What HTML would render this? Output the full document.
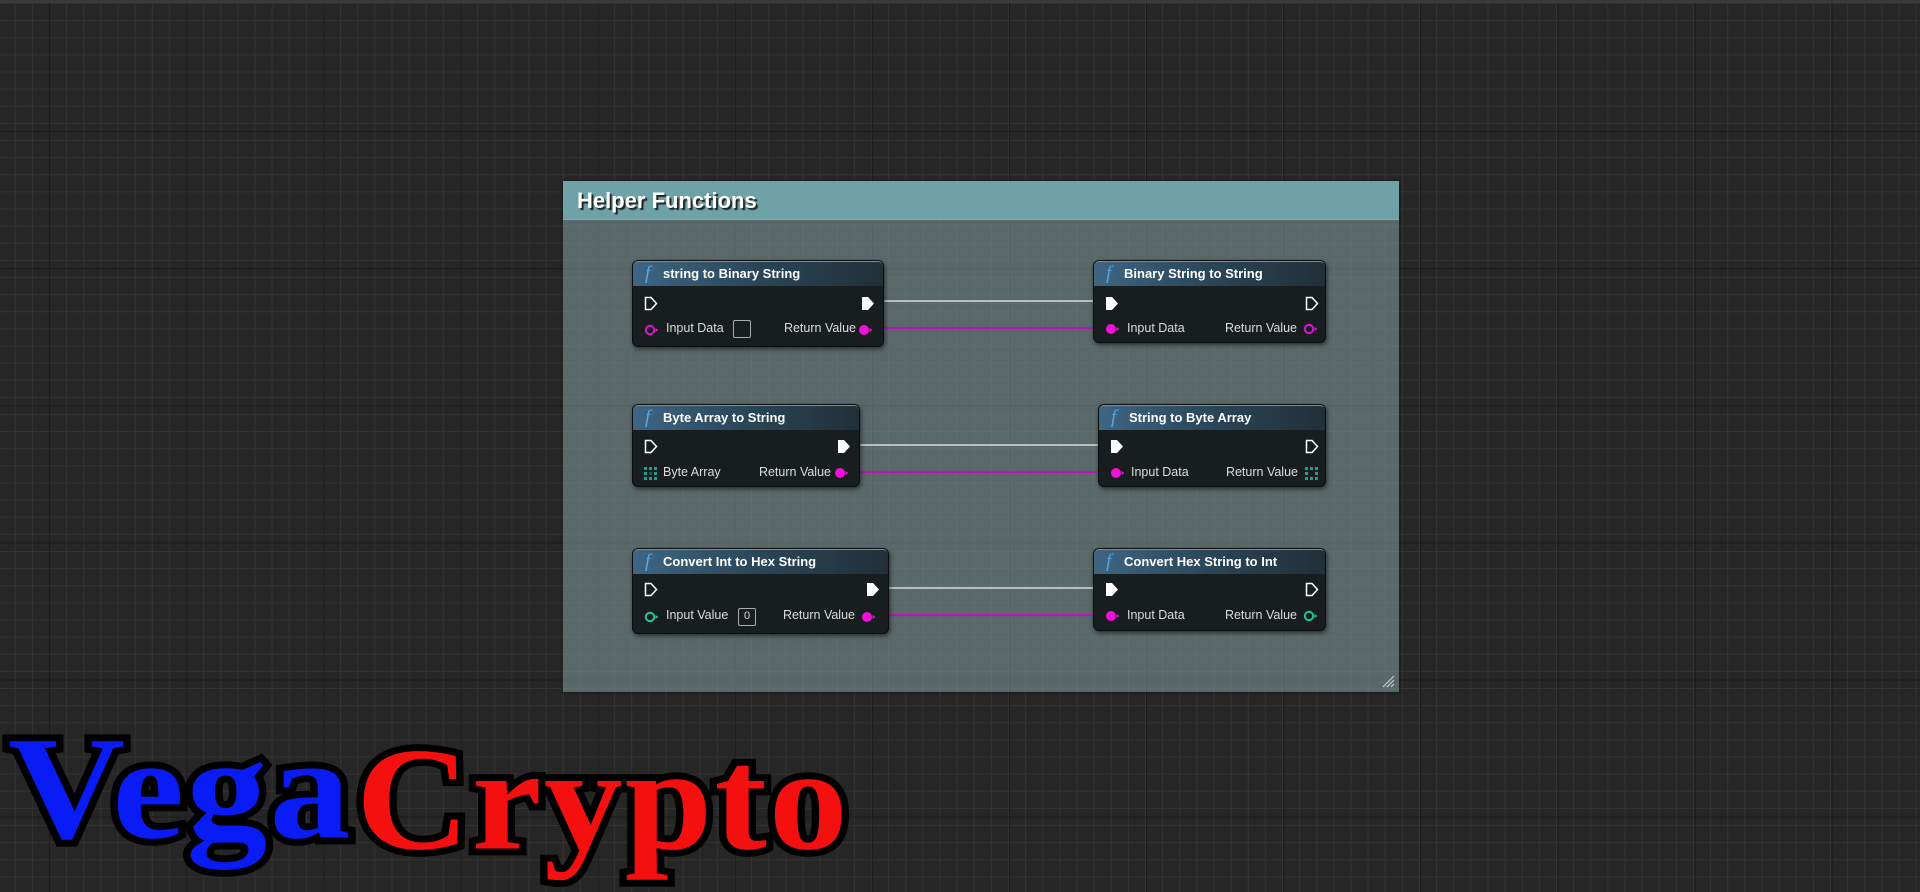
<!DOCTYPE html>
<html><head><meta charset="utf-8"><style>
*{margin:0;padding:0;box-sizing:border-box}
body{width:1920px;height:892px;overflow:hidden;position:relative;background:#262626;font-family:"Liberation Sans",sans-serif}
.grid{position:absolute;left:0;top:0;width:1920px;height:892px;
background-image:
linear-gradient(to right,#1b1b1b 1px,transparent 1px),
linear-gradient(to bottom,#1b1b1b 1px,transparent 1px),
linear-gradient(to right,#333 1px,transparent 1px),
linear-gradient(to bottom,#333 1px,transparent 1px);
background-size:137.14px 137.14px,137.14px 137.14px,17.14px 17.14px,17.14px 17.14px;
background-position:49px 0,0 131px,49px 0,0 3px;}
.topline{position:absolute;left:0;top:0;width:1920px;height:3px;background:#3a3a3a}
.comment{position:absolute;left:563px;top:181px;width:836px;height:511px;background:rgba(140,170,170,0.5);box-shadow:0 0 3px rgba(0,0,0,.6)}
.chead{position:absolute;left:0;top:0;width:100%;height:39px;background:#6ea2a6;border-bottom:1px solid #7fb2b6}
.chead span{position:absolute;left:14px;top:7px;font-size:22px;font-weight:bold;color:#fff;text-shadow:2px 2px 1px #222}
.node{position:absolute;background:#181e20;border:1px solid #0a0c0d;border-radius:6px;box-shadow:1px 2px 5px rgba(0,0,0,.55);color:#ddd;font-size:12.5px}
.nh{position:absolute;left:0;top:0;right:0;height:25px;border-radius:5px 5px 0 0;background:linear-gradient(to right,#3f6683,#2a4558 50%,#213038);border-top:1px solid #6e93ad}
.nh i{position:absolute;left:12px;top:1px;font-family:"Liberation Serif",serif;font-size:19px;color:#52a8e8}
.nh b{position:absolute;left:30px;top:4px;font-size:13px;color:#fff}
.p{position:absolute}
.lbl{position:absolute;white-space:nowrap}
.box{position:absolute;width:18px;height:18px;border:1.5px solid #aaa;border-radius:2px;font-size:11px;text-align:center;line-height:15px;color:#ddd}
.w{position:absolute}
.logo{position:absolute;font-family:"Liberation Serif",serif;font-weight:bold;font-size:150px;-webkit-text-stroke:14px #000;paint-order:stroke fill;transform-origin:0 0;letter-spacing:2px;white-space:nowrap;line-height:1}
</style></head><body>
<div class="grid"></div>
<div class="topline"></div>

<div class="comment">
 <div class="chead"><span>Helper Functions</span></div>
 <svg style="position:absolute;right:4px;bottom:4px" width="14" height="14"><path d="M2 13 L13 2 M6 13 L13 6 M10 13 L13 10" stroke="#ccc" stroke-width="1.2"/></svg>
</div>

<div class="w" style="left:872px;top:300px;width:224px;height:2px;background:#bdbdbd"></div>
<div class="w" style="left:871px;top:327px;width:225px;height:2px;background:#c010c0"></div>
<div class="w" style="left:846px;top:444px;width:255px;height:2px;background:#bdbdbd"></div>
<div class="w" style="left:846px;top:471px;width:255px;height:2px;background:#c010c0"></div>
<div class="w" style="left:876px;top:587px;width:220px;height:2px;background:#bdbdbd"></div>
<div class="w" style="left:876px;top:614px;width:220px;height:2px;background:#c010c0"></div>

<div class="node" style="left:632px;top:260px;width:252px;height:87px">
 <div class="nh"><i>f</i><b>string to Binary String</b></div>
 <svg class="p" style="left:11px;top:35px" width="14" height="15"><path d="M1.5 1.5H7L12.5 7.5L7 13.5H1.5Z" fill="none" stroke="#fff" stroke-width="1.5"/></svg>
 <svg class="p" style="left:228px;top:35px" width="14" height="15"><path d="M1 1H7L13 7.5L7 14H1Z" fill="#fff"/></svg>
 <svg class="p" style="left:11px;top:62px" width="16" height="14"><circle cx="6" cy="7" r="4.2" fill="none" stroke="#e010d0" stroke-width="2"/><path d="M11.5 5L14.5 7L11.5 9Z" fill="#e010d0"/></svg>
 <span class="lbl" style="left:33px;top:60px">Input Data</span>
 <div class="box" style="left:100px;top:59px"></div>
 <span class="lbl" style="right:27px;top:60px">Return Value</span>
 <svg class="p" style="left:225px;top:62px" width="16" height="14"><circle cx="6" cy="7" r="5" fill="#f010d8"/><path d="M11.5 5L14.5 7L11.5 9Z" fill="#f010d8"/></svg>
</div>

<div class="node" style="left:1093px;top:260px;width:233px;height:83px">
 <div class="nh"><i>f</i><b>Binary String to String</b></div>
 <svg class="p" style="left:11px;top:35px" width="14" height="15"><path d="M1 1H7L13 7.5L7 14H1Z" fill="#fff"/></svg>
 <svg class="p" style="left:211px;top:35px" width="14" height="15"><path d="M1.5 1.5H7L12.5 7.5L7 13.5H1.5Z" fill="none" stroke="#fff" stroke-width="1.5"/></svg>
 <svg class="p" style="left:11px;top:61px" width="16" height="14"><circle cx="6" cy="7" r="5" fill="#f010d8"/><path d="M11.5 5L14.5 7L11.5 9Z" fill="#f010d8"/></svg>
 <span class="lbl" style="left:33px;top:60px">Input Data</span>
 <span class="lbl" style="right:28px;top:60px">Return Value</span>
 <svg class="p" style="left:209px;top:61px" width="16" height="14"><circle cx="6" cy="7" r="4.2" fill="none" stroke="#e010d0" stroke-width="2"/><path d="M11.5 5L14.5 7L11.5 9Z" fill="#e010d0"/></svg>
</div>

<div class="node" style="left:632px;top:404px;width:228px;height:83px">
 <div class="nh"><i>f</i><b>Byte Array to String</b></div>
 <svg class="p" style="left:11px;top:34px" width="14" height="15"><path d="M1.5 1.5H7L12.5 7.5L7 13.5H1.5Z" fill="none" stroke="#fff" stroke-width="1.5"/></svg>
 <svg class="p" style="left:204px;top:34px" width="14" height="15"><path d="M1 1H7L13 7.5L7 14H1Z" fill="#fff"/></svg>
 <svg class="p" style="left:11px;top:62px" width="13" height="13"><g fill="#1aa090"><rect x="0" y="0" width="3" height="3"/><rect x="5" y="0" width="3" height="3"/><rect x="10" y="0" width="3" height="3"/><rect x="0" y="5" width="3" height="3"/><rect x="10" y="5" width="3" height="3"/><rect x="0" y="10" width="3" height="3"/><rect x="5" y="10" width="3" height="3"/><rect x="10" y="10" width="3" height="3"/></g><rect x="5" y="5" width="3" height="3" fill="#0d5a52"/></svg>
 <span class="lbl" style="left:30px;top:60px">Byte Array</span>
 <span class="lbl" style="right:28px;top:60px">Return Value</span>
 <svg class="p" style="left:201px;top:61px" width="16" height="14"><circle cx="6" cy="7" r="5" fill="#f010d8"/><path d="M11.5 5L14.5 7L11.5 9Z" fill="#f010d8"/></svg>
</div>

<div class="node" style="left:1098px;top:404px;width:228px;height:83px">
 <div class="nh"><i>f</i><b>String to Byte Array</b></div>
 <svg class="p" style="left:11px;top:34px" width="14" height="15"><path d="M1 1H7L13 7.5L7 14H1Z" fill="#fff"/></svg>
 <svg class="p" style="left:206px;top:34px" width="14" height="15"><path d="M1.5 1.5H7L12.5 7.5L7 13.5H1.5Z" fill="none" stroke="#fff" stroke-width="1.5"/></svg>
 <svg class="p" style="left:11px;top:61px" width="16" height="14"><circle cx="6" cy="7" r="5" fill="#f010d8"/><path d="M11.5 5L14.5 7L11.5 9Z" fill="#f010d8"/></svg>
 <span class="lbl" style="left:32px;top:60px">Input Data</span>
 <span class="lbl" style="right:27px;top:60px">Return Value</span>
 <svg class="p" style="left:206px;top:62px" width="13" height="13"><g fill="#1aa090"><rect x="0" y="0" width="3" height="3"/><rect x="5" y="0" width="3" height="3"/><rect x="10" y="0" width="3" height="3"/><rect x="0" y="5" width="3" height="3"/><rect x="10" y="5" width="3" height="3"/><rect x="0" y="10" width="3" height="3"/><rect x="5" y="10" width="3" height="3"/><rect x="10" y="10" width="3" height="3"/></g></svg>
</div>

<div class="node" style="left:632px;top:548px;width:257px;height:86px">
 <div class="nh"><i>f</i><b>Convert Int to Hex String</b></div>
 <svg class="p" style="left:11px;top:33px" width="14" height="15"><path d="M1.5 1.5H7L12.5 7.5L7 13.5H1.5Z" fill="none" stroke="#fff" stroke-width="1.5"/></svg>
 <svg class="p" style="left:233px;top:33px" width="14" height="15"><path d="M1 1H7L13 7.5L7 14H1Z" fill="#fff"/></svg>
 <svg class="p" style="left:11px;top:61px" width="16" height="14"><circle cx="6" cy="7" r="4.2" fill="none" stroke="#1fc49a" stroke-width="2"/><path d="M11.5 5L14.5 7L11.5 9Z" fill="#1fc49a"/></svg>
 <span class="lbl" style="left:33px;top:59px">Input Value</span>
 <div class="box" style="left:105px;top:59px">0</div>
 <span class="lbl" style="right:33px;top:59px">Return Value</span>
 <svg class="p" style="left:228px;top:61px" width="16" height="14"><circle cx="6" cy="7" r="5" fill="#f010d8"/><path d="M11.5 5L14.5 7L11.5 9Z" fill="#f010d8"/></svg>
</div>

<div class="node" style="left:1093px;top:548px;width:233px;height:83px">
 <div class="nh"><i>f</i><b>Convert Hex String to Int</b></div>
 <svg class="p" style="left:11px;top:33px" width="14" height="15"><path d="M1 1H7L13 7.5L7 14H1Z" fill="#fff"/></svg>
 <svg class="p" style="left:211px;top:33px" width="14" height="15"><path d="M1.5 1.5H7L12.5 7.5L7 13.5H1.5Z" fill="none" stroke="#fff" stroke-width="1.5"/></svg>
 <svg class="p" style="left:11px;top:60px" width="16" height="14"><circle cx="6" cy="7" r="5" fill="#f010d8"/><path d="M11.5 5L14.5 7L11.5 9Z" fill="#f010d8"/></svg>
 <span class="lbl" style="left:33px;top:59px">Input Data</span>
 <span class="lbl" style="right:28px;top:59px">Return Value</span>
 <svg class="p" style="left:209px;top:60px" width="16" height="14"><circle cx="6" cy="7" r="4.2" fill="none" stroke="#1fc49a" stroke-width="2"/><path d="M11.5 5L14.5 7L11.5 9Z" fill="#1fc49a"/></svg>
</div>

<div class="logo" style="left:8px;top:715px;color:#0a1cf5;transform:scale(1.08,0.98)">Vega</div>
<div class="logo" style="left:356px;top:726px;color:#f51010;transform:scale(1.05,0.98)">Crypto</div>
</body></html>
